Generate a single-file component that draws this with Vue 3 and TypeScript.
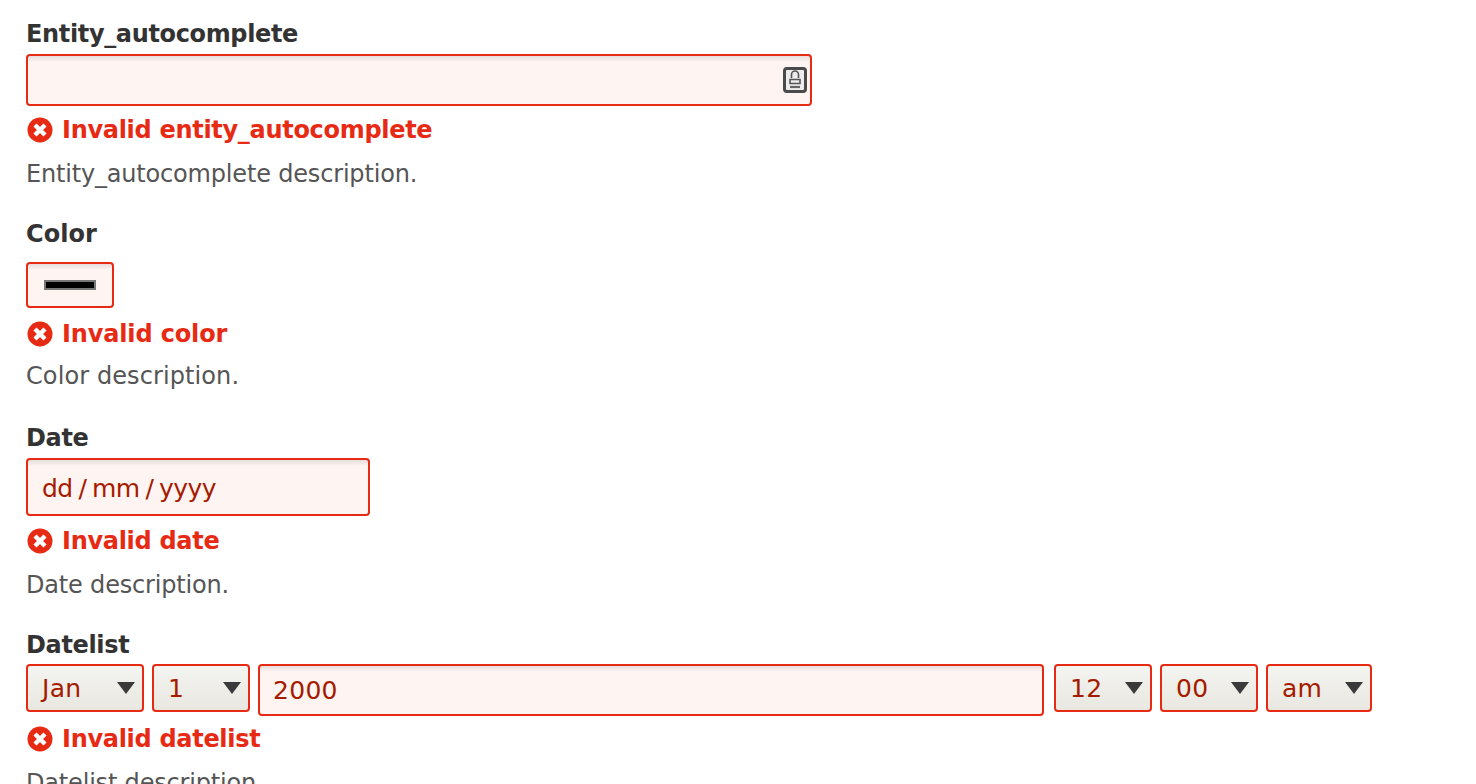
<script setup lang="ts">
interface Part { text: string; width: number }
const dateParts: Part[] = [
  { text: 'Jan', width: 118 },
  { text: '1', width: 98 },
]
const timeParts: Part[] = [
  { text: '12', width: 98 },
  { text: '00', width: 98 },
  { text: 'am', width: 106 },
]
</script>

<template>
  <main class="page">
    <section class="field f-entity">
      <div class="label">Entity_autocomplete</div>
      <div class="box entity">
        <svg class="ac-icon" width="24" height="26" viewBox="0 0 24 26" aria-hidden="true">
          <rect x="1.5" y="1.5" width="21" height="23" rx="2.5" fill="#eeeded" stroke="#4a4a4a" stroke-width="3" />
          <path d="M8.5 11V7.5a3.5 3.5 0 0 1 7 0V11" fill="none" stroke="#555" stroke-width="1.6" />
          <path d="M7 12.5h10v4H7z" fill="none" stroke="#555" stroke-width="1.6" />
          <path d="M7 20h10" stroke="#666" stroke-width="2.2" />
        </svg>
      </div>
      <div class="error">
        <svg class="err-icon" width="26" height="26" viewBox="0 0 26 26" aria-hidden="true">
          <circle cx="13" cy="13" r="12.5" fill="#e72a14" />
          <path d="M8 8l10 10M18 8L8 18" stroke="#fff" stroke-width="4.4" />
        </svg>
        <span>Invalid entity_autocomplete</span>
      </div>
      <div class="desc">Entity_autocomplete description.</div>
    </section>

    <section class="field f-color">
      <div class="label">Color</div>
      <div class="box color"><span class="swatch"></span></div>
      <div class="error">
        <svg class="err-icon" width="26" height="26" viewBox="0 0 26 26" aria-hidden="true">
          <circle cx="13" cy="13" r="12.5" fill="#e72a14" />
          <path d="M8 8l10 10M18 8L8 18" stroke="#fff" stroke-width="4.4" />
        </svg>
        <span>Invalid color</span>
      </div>
      <div class="desc">Color description.</div>
    </section>

    <section class="field f-date">
      <div class="label">Date</div>
      <div class="box date">dd / mm / yyyy</div>
      <div class="error">
        <svg class="err-icon" width="26" height="26" viewBox="0 0 26 26" aria-hidden="true">
          <circle cx="13" cy="13" r="12.5" fill="#e72a14" />
          <path d="M8 8l10 10M18 8L8 18" stroke="#fff" stroke-width="4.4" />
        </svg>
        <span>Invalid date</span>
      </div>
      <div class="desc">Date description.</div>
    </section>

    <section class="field f-list">
      <div class="label">Datelist</div>
      <div class="row">
        <div v-for="p in dateParts" :key="p.text" class="box select" :style="{ width: p.width + 'px' }">
          <span>{{ p.text }}</span>
          <svg width="18" height="12" viewBox="0 0 18 12" aria-hidden="true"><path d="M0 0h18L9 12z" fill="#3a3a3a" /></svg>
        </div>
        <div class="box year">2000</div>
        <div class="times">
          <div v-for="p in timeParts" :key="p.text" class="box select" :style="{ width: p.width + 'px' }">
            <span>{{ p.text }}</span>
            <svg width="18" height="12" viewBox="0 0 18 12" aria-hidden="true"><path d="M0 0h18L9 12z" fill="#3a3a3a" /></svg>
          </div>
        </div>
      </div>
      <div class="error">
        <svg class="err-icon" width="26" height="26" viewBox="0 0 26 26" aria-hidden="true">
          <circle cx="13" cy="13" r="12.5" fill="#e72a14" />
          <path d="M8 8l10 10M18 8L8 18" stroke="#fff" stroke-width="4.4" />
        </svg>
        <span>Invalid datelist</span>
      </div>
      <div class="desc">Datelist description.</div>
    </section>
  </main>
</template>

<style>
html, body { margin: 0; background: #fff; overflow: hidden; }
</style>

<style scoped>
.page {
  box-sizing: border-box;
  height: 784px;
  overflow: hidden;
  padding: 17px 0 0 26px;
  font-family: "DejaVu Sans", "Liberation Sans", sans-serif;
  font-size: 25px;
  letter-spacing: 0.3px;
  color: #333;
}
.field { display: flex; flex-direction: column; }
.f-color { margin-top: 26px; }
.f-date { margin-top: 28px; }
.f-list { margin-top: 26px; }
.label { font-weight: 700; font-size: 24px; letter-spacing: -0.35px; line-height: 34px; color: #333; }
.f-color .label { letter-spacing: 0.05px; }
.box {
  box-sizing: border-box;
  border: 2px solid #e72a14;
  border-radius: 4px;
  background: linear-gradient(#e6dfdd, #fef4f1 6px);
  color: #a51b00;
  display: flex;
  align-items: center;
}
.entity { width: 786px; height: 52px; margin-top: 3px; justify-content: flex-end; padding-right: 3px; }
.ac-icon { display: block; filter: blur(0.6px); }
.color { width: 88px; height: 46px; margin-top: 11px; justify-content: center; }
.swatch { box-sizing: border-box; width: 52px; height: 10px; background: #000; border: 2px solid #777; }
.date { width: 344px; height: 58px; margin-top: 3px; padding: 2px 0 0 14px; letter-spacing: -0.6px; word-spacing: -1.5px; }
.row { display: flex; align-items: flex-start; gap: 8px; margin-top: 2px; }
.times { display: flex; gap: 8px; margin-left: 2px; }
.select {
  height: 48px;
  justify-content: space-between;
  padding: 0 7px 0 14px;
  background: linear-gradient(#f4f4f1, #e8e7e0);
}
.year { width: 786px; height: 52px; padding-left: 13px; }
.error {
  display: flex;
  align-items: center;
  gap: 9px;
  font-weight: 700;
  font-size: 24px;
  letter-spacing: -0.3px;
  color: #e72a14;
  line-height: 34px;
  margin-top: 7px;
  padding-left: 1px;
}
.err-icon { flex: none; }
.desc { color: #555; line-height: 34px; margin-top: 10px; font-size: 24px; letter-spacing: -0.18px; }
.f-color .error { margin-top: 9px; letter-spacing: -0.15px; }
.f-color .desc { margin-top: 8px; letter-spacing: 0.1px; }
.f-date .error { margin-top: 8px; }
.f-list .error { margin-top: 6px; }
</style>
